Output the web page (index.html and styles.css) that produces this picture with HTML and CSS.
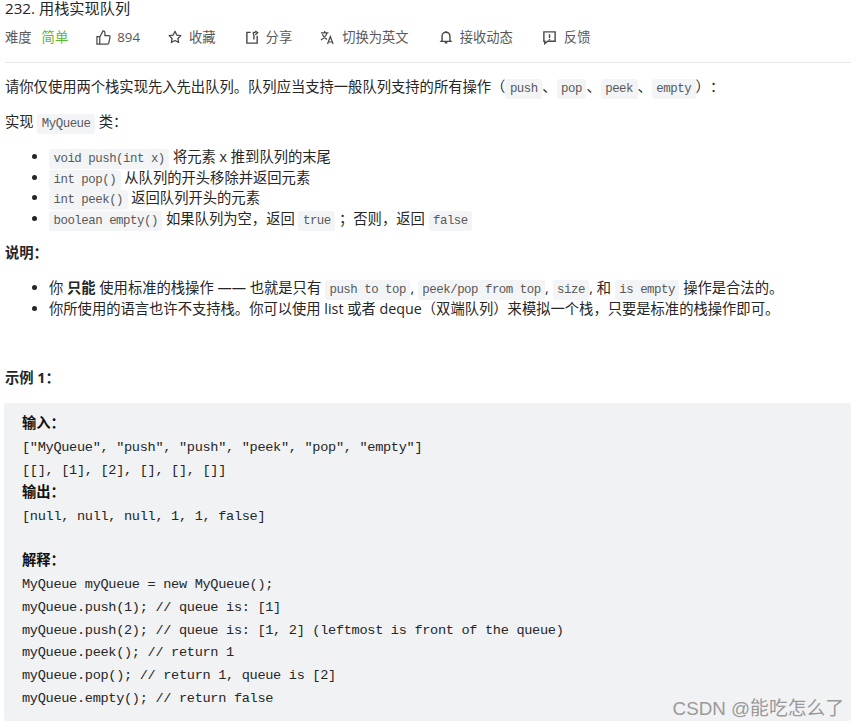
FILE: index.html
```html
<!DOCTYPE html>
<html lang="zh">
<head>
<meta charset="utf-8">
<title>232. 用栈实现队列</title>
<link rel="stylesheet" href="styles.css">
</head>
<body>
<h1 class="title">232. 用栈实现队列</h1>
<div class="meta">
  <span class="meta-label">难度</span>
  <span class="easy">简单</span>
  <span class="action act-like"><svg class="icon" viewBox="0 0 16 16"><path d="M1 7h3v8H1zM4 7.500 7.500 1c1.300 0 2 .9 2 2v3h4.300c.8 0 1.400.7 1.200 1.500l-1.300 6.200c-.1.800-.7 1.300-1.500 1.300H4" fill="none" stroke="currentColor" stroke-width="1.300"/></svg>894</span>
  <span class="action act-star"><svg class="icon icon-small" viewBox="0 0 16 16"><path d="m8 1.500 2 4.300 4.700.6-3.400 3.200.9 4.700L8 12l-4.200 2.300.9-4.700L1.300 6.400 6 5.800z" fill="none" stroke="currentColor" stroke-width="1.500" stroke-linejoin="round"/></svg>收藏</span>
  <span class="action act-share"><svg class="icon" viewBox="0 0 16 16"><path d="M6 2.500H2v11.500h11V6M9 5V2.500h2.500M11 1 13.500 3 11 5M9.500 5v5" fill="none" stroke="currentColor" stroke-width="1.500"/></svg>分享</span>
  <span class="action act-lang"><svg class="icon" viewBox="0 0 16 16"><path d="M1 3h8M5 1v2M7.500 3C6.500 6.500 4 9 1 10.500M2.500 4.500C3.500 7 5.500 9 7.500 10M8 15l3-8 3 8M9 12.800h4" fill="none" stroke="currentColor" stroke-width="1.300"/></svg>切换为英文</span>
  <span class="action act-bell"><svg class="icon icon-small" viewBox="0 0 16 16"><path d="M3.500 12V7a4.500 4.500 0 0 1 9 0v5l1 1h-11zM8 1v1.500M6.500 14.500h3" fill="none" stroke="currentColor" stroke-width="1.600"/></svg>接收动态</span>
  <span class="action act-feedback"><svg class="icon" viewBox="0 0 16 16"><path d="M2 2h12v10H6l-3 2.500V12H2zM8 4.500v4M8 9.500v1.300" fill="none" stroke="currentColor" stroke-width="1.500"/></svg>反馈</span>
</div>
<hr class="rule">
<p class="intro">请你仅使用两个栈实现先入先出队列。队列应当支持一般队列支持的所有操作（<code>push</code>、<code>pop</code>、<code>peek</code>、<code>empty</code>）：</p>
<p class="impl">实现 <code>MyQueue</code> 类：</p>
<ul class="api">
  <li><code>void push(int x)</code> 将元素 x 推到队列的末尾</li>
  <li><code>int pop()</code> 从队列的开头移除并返回元素</li>
  <li><code>int peek()</code> 返回队列开头的元素</li>
  <li><code>boolean empty()</code> 如果队列为空，返回 <code>true</code> ；否则，返回 <code>false</code></li>
</ul>
<p class="head">说明：</p>
<ul class="notes">
  <li>你 <strong>只能</strong> 使用标准的栈操作 —— 也就是只有 <code>push to top</code>, <code>peek/pop from top</code>, <code>size</code>, 和 <code>is empty</code> 操作是合法的。</li>
  <li>你所使用的语言也许不支持栈。你可以使用 list 或者 deque（双端队列）来模拟一个栈，只要是标准的栈操作即可。</li>
</ul>
<p class="head example-head">示例 1：</p>
<pre class="sample"><strong>输入：</strong>
["MyQueue", "push", "push", "peek", "pop", "empty"]
[[], [1], [2], [], [], []]
<strong>输出：</strong>
[null, null, null, 1, 1, false]

<strong>解释：</strong>
MyQueue myQueue = new MyQueue();
myQueue.push(1); // queue is: [1]
myQueue.push(2); // queue is: [1, 2] (leftmost is front of the queue)
myQueue.peek(); // return 1
myQueue.pop(); // return 1, queue is [2]
myQueue.empty(); // return false</pre>
<div class="watermark">CSDN @能吃怎么了</div>
</body>
</html>
```
FILE: styles.css
```css
* { box-sizing: border-box; }
html, body { margin: 0; padding: 0; }
body {
  width: 856px;
  height: 728px;
  overflow: hidden;
  position: relative;
  padding: 0 5px;
  background: #fff;
  color: #262626;
  font-family: "Open Sans", "Noto Sans CJK SC", sans-serif;
  font-size: 14.300px;
  line-height: 20px;
  text-spacing-trim: space-all;
}
.title {
  margin: 0;
  font-size: 15.200px;
  font-weight: 400;
  line-height: 16px;
}
.meta {
  display: flex;
  align-items: center;
  height: 20px;
  margin-top: 11px;
  font-size: 13.300px;
  color: #595959;
}
.easy { margin-left: 10px; color: #5cb82c; }
.action { display: flex; align-items: center; gap: 6px; }
.act-like { margin-left: 28px; }
.act-star { margin-left: 28px; gap: 7px; }
.act-share { margin-left: 29px; }
.act-lang { margin-left: 28px; gap: 7px; }
.act-bell { margin-left: 30px; gap: 7px; }
.act-feedback { margin-left: 29px; gap: 7px; }
.icon { width: 15px; height: 15px; flex: none; color: #484848; }
.icon-small { width: 14px; height: 14px; }
.rule { margin: 15px 0 0; border: 0; border-top: 1px solid #e8e8e8; }
p { margin: 0; }
.intro { margin-top: 14px; }
.impl { margin-top: 15px; }
code {
  font-family: "Liberation Mono", monospace;
  font-size: 12.400px;
  letter-spacing: -0.480px;
  line-height: 1;
  color: #595959;
  background: #f3f4f6;
  border-radius: 3px;
  padding: 3px 4.500px;
}
ul { margin: 0; padding: 0 0 0 44px; }
li { line-height: 20.600px; }
.api { margin-top: 15px; }
.head { margin-top: 14px; font-weight: 700; }
.notes { margin-top: 15px; }
.notes li { line-height: 20.500px; }
.example-head { margin-top: 49px; }
.sample {
  width: 847px;
  height: 318px;
  margin: 15px 0 0 -1px;
  padding: 11px 18px;
  background: #f1f2f4;
  border-radius: 3px;
  font-family: "Liberation Mono", monospace;
  font-size: 13.600px;
  letter-spacing: -0.310px;
  line-height: 22.800px;
}
.sample strong {
  font-family: "Open Sans", "Noto Sans CJK SC", sans-serif;
  font-size: 14.300px;
  letter-spacing: 0;
  font-weight: 700;
  line-height: 1;
  color: #111;
}
.watermark {
  position: absolute;
  right: 12px;
  bottom: 8px;
  font-family: "Liberation Sans", "Noto Sans CJK SC", sans-serif;
  font-size: 18.800px;
  line-height: 22px;
  color: #999;
}
```
